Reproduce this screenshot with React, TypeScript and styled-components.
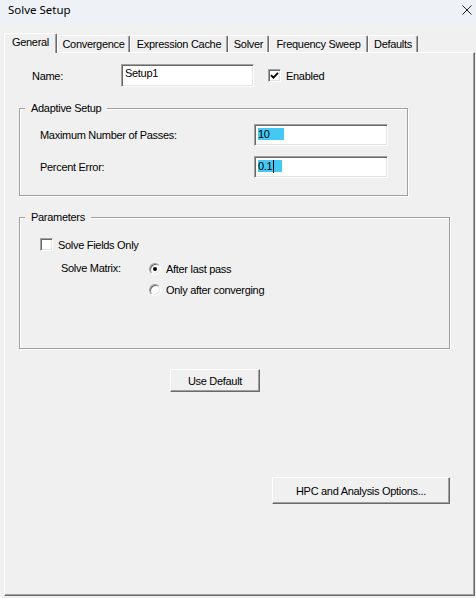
import styled, { createGlobalStyle } from 'styled-components'

const GlobalStyle = createGlobalStyle`
  html, body {
    margin: 0;
    padding: 0;
    background: #f0f0f0;
  }

  body {
    font-family: 'Liberation Sans', Arial, sans-serif;
    font-size: 11px;
    letter-spacing: -0.3px;
    color: #000;
  }
`

const Window = styled.div`
  width: 476px;
  height: 598px;
  display: flex;
  flex-direction: column;
  background: #f0f0f0;
  overflow: hidden;
`

const TitleBar = styled.div`
  height: 25px;
  flex: none;
  display: flex;
  align-items: flex-start;
  justify-content: space-between;
  padding-left: 8px;
  box-sizing: border-box;
  background: #eef2f6;
`

const Title = styled.span`
  font-family: 'Noto Sans', 'Liberation Sans', sans-serif;
  font-size: 11.5px;
  letter-spacing: 0;
  line-height: 20px;
`

const CloseButton = styled.div`
  width: 18px;
  height: 19px;
  display: flex;
  align-items: center;
  justify-content: center;
`

const TabStrip = styled.div`
  height: 27px;
  flex: none;
  display: flex;
  align-items: flex-end;
  padding-left: 4px;
  box-sizing: border-box;
`

const Tab = styled.div<{ $width: number; $active?: boolean }>`
  position: relative;
  z-index: ${(p) => (p.$active ? 1 : 0)};
  width: ${(p) => p.$width}px;
  height: ${(p) => (p.$active ? 20 : 17)}px;
  margin-bottom: ${(p) => (p.$active ? -1 : 0)}px;
  padding-bottom: ${(p) => (p.$active ? 3 : 0)}px;
  display: flex;
  align-items: center;
  justify-content: center;
  box-sizing: border-box;
  background: #f0f0f0;
  border-top: 1px solid #fff;
  border-left: 1px solid #fff;
  border-right: 1px solid #696969;
  border-radius: 2px 2px 0 0;
  box-shadow: inset -1px 0 0 #a0a0a0;
  white-space: nowrap;
`

const Panel = styled.div`
  margin-left: 4px;
  width: 471px;
  height: 544px;
  flex: none;
  display: flex;
  flex-direction: column;
  align-items: flex-start;
  box-sizing: border-box;
  border-top: 1px solid #fff;
  border-left: 1px solid #fff;
  border-right: 1px solid #696969;
  border-bottom: 1px solid #696969;
  box-shadow: inset -1px -1px 0 #a0a0a0;
`

const NameRow = styled.div`
  margin-top: 11px;
  padding-left: 27px;
  height: 23px;
  display: flex;
  align-items: center;
`

const FieldLabel = styled.span<{ $width: number }>`
  width: ${(p) => p.$width}px;
  flex: none;
  white-space: nowrap;
`

const TextBox = styled.div<{ $width: number; $height: number }>`
  width: ${(p) => p.$width}px;
  height: ${(p) => p.$height}px;
  flex: none;
  display: flex;
  align-items: flex-start;
  padding: 2px 3px 0;
  box-sizing: border-box;
  background: #fff;
  border: 1px solid;
  border-color: #a0a0a0 #fff #fff #a0a0a0;
  box-shadow: inset 1px 1px 0 #696969, inset -1px -1px 0 #e3e3e3;
  line-height: 13px;
  white-space: nowrap;
`

const Selection = styled.span<{ $trail: number }>`
  display: inline-flex;
  align-items: center;
  height: 12px;
  line-height: 12px;
  margin-top: 1px;
  padding-right: ${(p) => p.$trail}px;
  background: #46c8f5;
`

const Caret = styled.span`
  display: inline-block;
  width: 1px;
  height: 13px;
  margin-left: 1px;
  background: #000;
`

const CheckRow = styled.label<{ $indent?: number }>`
  display: flex;
  align-items: center;
  gap: 5px;
  height: 13px;
  margin-left: ${(p) => p.$indent ?? 0}px;
  white-space: nowrap;
`

const CheckBox = styled.span`
  width: 13px;
  height: 13px;
  flex: none;
  display: inline-flex;
  align-items: center;
  justify-content: center;
  box-sizing: border-box;
  background: #fff;
  border: 1px solid;
  border-color: #a0a0a0 #fff #fff #a0a0a0;
  box-shadow: inset 1px 1px 0 #696969, inset -1px -1px 0 #e3e3e3;
`

const Group = styled.fieldset<{ $width: number }>`
  margin: 15px 0 0 14px;
  padding: 0;
  min-width: 0;
  width: ${(p) => p.$width}px;
  box-sizing: border-box;
  border: 1px solid #a0a0a0;
  box-shadow: inset 1px 1px 0 #fff, 1px 1px 0 #fff;
`

const Legend = styled.legend`
  margin-left: 5px;
  padding: 0 6px;
  line-height: 13px;
  background: #f0f0f0;
`

const GroupBody = styled.div<{ $top: number; $bottom: number }>`
  display: flex;
  flex-direction: column;
  gap: 10px;
  padding: ${(p) => p.$top}px 0 ${(p) => p.$bottom}px 20px;
`

const ValueRow = styled.div`
  display: flex;
  align-items: center;
`

const MatrixRow = styled.div`
  display: flex;
  align-items: flex-start;
  margin-top: 1px;
  padding-left: 21px;
`

const MatrixLabel = styled.span`
  width: 88px;
  line-height: 13px;
`

const RadioList = styled.div`
  display: flex;
  flex-direction: column;
  gap: 8px;
`

const RadioRow = styled.label`
  display: flex;
  align-items: center;
  gap: 5px;
  height: 13px;
  white-space: nowrap;
`

const Radio = styled.span<{ $checked?: boolean }>`
  position: relative;
  width: 12px;
  height: 12px;
  flex: none;
  box-sizing: border-box;
  border-radius: 50%;
  background: #fff;
  border: 1px solid;
  border-color: #a0a0a0 #fff #fff #a0a0a0;
  box-shadow: inset 1px 1px 0 #696969, inset -1px -1px 0 #e3e3e3;

  &::after {
    content: '';
    display: ${(p) => (p.$checked ? 'block' : 'none')};
    position: absolute;
    left: 3px;
    top: 3px;
    width: 4px;
    height: 4px;
    border-radius: 50%;
    background: #000;
  }
`

const Button = styled.button<{ $left: number; $top: number; $width: number; $height: number }>`
  margin: ${(p) => p.$top}px 0 0 ${(p) => p.$left}px;
  width: ${(p) => p.$width}px;
  height: ${(p) => p.$height}px;
  padding: 0;
  flex: none;
  box-sizing: border-box;
  background: #f0f0f0;
  border: 1px solid;
  border-color: #fff #696969 #696969 #fff;
  box-shadow: inset -1px -1px 0 #a0a0a0;
  font: inherit;
  letter-spacing: inherit;
  color: #000;
`

const tabs = [
  { label: 'General', width: 53, active: true },
  { label: 'Convergence', width: 73 },
  { label: 'Expression Cache', width: 98 },
  { label: 'Solver', width: 41 },
  { label: 'Frequency Sweep', width: 99 },
  { label: 'Defaults', width: 50 },
]

const CheckMark = () => (
  <svg width="9" height="9" viewBox="0 0 9 9">
    <polyline points="1,4.2 3.4,6.6 8,1.8" fill="none" stroke="#000" strokeWidth="1.8" />
  </svg>
)

const App = () => {
  return (
    <Window>
      <GlobalStyle />
      <TitleBar>
        <Title>Solve Setup</Title>
        <CloseButton>
          <svg width="10" height="10" viewBox="0 0 10 10">
            <path d="M0.5 0.5 L9.5 9.5 M9.5 0.5 L0.5 9.5" stroke="#222" strokeWidth="1" />
          </svg>
        </CloseButton>
      </TitleBar>

      <TabStrip>
        {tabs.map((t) => (
          <Tab key={t.label} $width={t.width} $active={t.active}>
            {t.label}
          </Tab>
        ))}
      </TabStrip>

      <Panel>
        <NameRow>
          <FieldLabel $width={89}>Name:</FieldLabel>
          <TextBox $width={133} $height={23}>Setup1</TextBox>
          <CheckRow $indent={14}>
            <CheckBox>
              <CheckMark />
            </CheckBox>
            Enabled
          </CheckRow>
        </NameRow>

        <Group $width={389}>
          <Legend>Adaptive Setup</Legend>
          <GroupBody $top={9} $bottom={17}>
            <ValueRow>
              <FieldLabel $width={214}>Maximum Number of Passes:</FieldLabel>
              <TextBox $width={134} $height={22}>
                <Selection $trail={14}>10</Selection>
              </TextBox>
            </ValueRow>
            <ValueRow>
              <FieldLabel $width={214}>Percent Error:</FieldLabel>
              <TextBox $width={134} $height={22}>
                <Selection $trail={8}>
                  0.1
                  <Caret />
                </Selection>
              </TextBox>
            </ValueRow>
          </GroupBody>
        </Group>

        <Group $width={431}>
          <Legend>Parameters</Legend>
          <GroupBody $top={14} $bottom={52}>
            <CheckRow>
              <CheckBox />
              Solve Fields Only
            </CheckRow>
            <MatrixRow>
              <MatrixLabel>Solve Matrix:</MatrixLabel>
              <RadioList>
                <RadioRow>
                  <Radio $checked />
                  After last pass
                </RadioRow>
                <RadioRow>
                  <Radio />
                  Only after converging
                </RadioRow>
              </RadioList>
            </MatrixRow>
          </GroupBody>
        </Group>

        <Button $left={165} $top={20} $width={90} $height={23}>
          Use Default
        </Button>
        <Button $left={267} $top={85} $width={178} $height={27}>
          HPC and Analysis Options...
        </Button>
      </Panel>
    </Window>
  )
}

export default App
